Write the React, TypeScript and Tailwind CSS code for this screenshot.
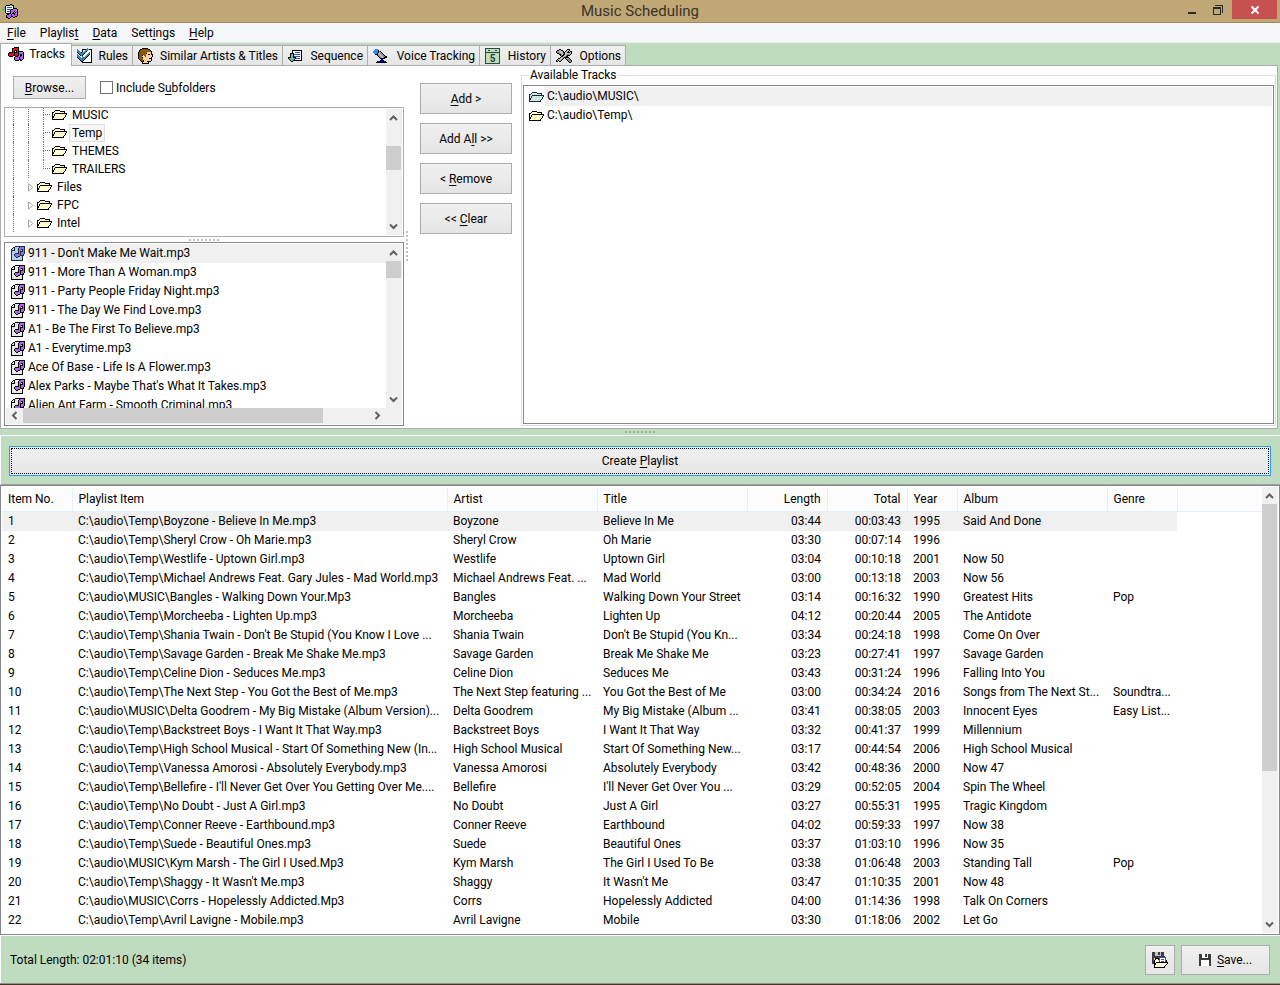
import React, { useState } from 'react';

const palette: Record<string, string> = {
  k: '#000000',
  n: '#1b2a3c',
  p: '#b660f2',
  v: '#8f74e6',
  r: '#d8141c',
  y: '#ffffcc',
  c: '#cfe8e0',
  w: '#e8e8e8',
  W: '#ffffff',
  l: '#b4d2ee',
  b: '#2f4fd0',
  g: '#5fc46a',
  G: '#62c48c',
  d: '#3c3c3c',
  h: '#8a5a00',
  s: '#ffd0a0',
  B: '#2f86b8',
  m: '#1e90ff',
  a: '#8c8c8c',
  x: '#c4c4c4',
  D: '#000080',
};

const icons: Record<string, string[]> = {
  app: [
    '........kk......',
    '....kkkkggkk....',
    '...kWWWWWWWk....',
    '..gkWbbbbbWkg...',
    '.ggkWWWWWWWkkkk.',
    'gggkWbbbbkkppppk',
    '.ggkWWWWkppppppk',
    '..gkWbbbkpppkppk',
    '...kWWWWkppk.kpk',
    '....kkkkkpkkkppk',
    '.....kkppkppkppk',
    '....kppppkpppppk',
    '....kppppkkppkk.',
    '....kkppk..kk...',
    '......kk........',
  ],
  tracks: [
    '......kkkkk.....',
    '....kkrrrrk.....',
    '....krrrrrk.....',
    '....krrkkrk.....',
    '....krk.krkkkkk.',
    '.kkkkrkkkrkppppk',
    'krrrrrkrrrkppppk',
    'krrrrrkrrrkpkkpk',
    'krrrrkkrrkkpkkpk',
    '.kkkk..kkkppkppk',
    '......kppppkpppk',
    '......kppppkpppk',
    '......kppppkkpk.',
    '.......kkkk.kk..',
  ],
  rules: [
    '..........B.....',
    'B....kkkkBBBkkk.',
    'BB...kWWBBBWWWk.',
    'BBB..kWBBkWWWWk.',
    'kBBBkBBBBWWWBWk.',
    '.kBBBBBkWWWBBWk.',
    'B.kBBBkWWWBBkWk.',
    'BB.kBkWWWBBkWWk.',
    'BBB..BWWBBkWWWk.',
    'kBBB.BBBBkWWWWk.',
    '.kBBBBBBkWWWWWk.',
    '..kBBBBkWWWWWWk.',
    '...kBBkWWWWWWWk.',
    '....kkWWWWWWWWk.',
    '.....kkkkkkkkkk.',
  ],
  similar: [
    '....kkkkkk......',
    '..kkhhhhhhkk....',
    '.khhhhhhhhhhk...',
    '.khhhhhhhhhhhk..',
    'khhhhhhhhssssk..',
    'khhhhhhhkssssk..',
    'khhhhhhhsskkskk.',
    'khhhkshhssssssk.',
    'khhhssshssssssk.',
    'khhhkssssssssk..',
    'khhhhsssssskkk..',
    '.khhhssssssssk..',
    '..khhksssssssk..',
    '...kkkssskkkk...',
    '....ksssssk.....',
    '....kkkkkkk.....',
  ],
  sequence: [
    '....kkkkkkkkkk..',
    '....kWWWWWWWWk..',
    '....kWWbbbbbWk..',
    '..kkkkWWWWWWWk..',
    '..kGGkbbbbbbWk..',
    '..kGGkWWWWWWWk..',
    '..kGGkbbbbbbWk..',
    'kkkGGkkkWWWWWk..',
    'kGGGGGGkbbbbWk..',
    '.kGGGGkWWWWWWk..',
    '..kGGkkkkkkkkk..',
    '...kk...........',
  ],
  voice: [
    '..mmm...........',
    '.mmmmk..........',
    'mmmmmkak........',
    'mmmmmkxak.......',
    '.mmmkxxaak......',
    '..kkkaxxaak.....',
    '....kaaxxaak....',
    '.....kaaxxaakk..',
    '......kaaxakkk..',
    '.......kkDkk....',
    '........DD......',
    '.......DDDD.....',
    '....kDDDDDDDk...',
    '...kkkkkkkkkkk..',
  ],
  options: [
    '...kk......kkk..',
    '.kkxxkk...kxxk..',
    'kaaxxxak.kxxk.kk',
    'kaaaxxxkkxxkkkxk',
    '.kkaaxxakxxxxxxk',
    '...kkaxkkxxaaak.',
    '....kakkxxakkk..',
    '.....kkxxakk....',
    '....kxxakkkkk...',
    '..kkxxak.kaaak..',
    '.kxxxak...kaaak.',
    'kxkxak.....kaaak',
    'kk.kk.......kaak',
    '.............kk.',
  ],
  folder: [
    '...kkkkk.......',
    '..kyyyyykkkkk..',
    'kkyyyyyyyyyyk..',
    'kyykkkkkkkkkkkk',
    'kykyyyyyyyyyyyk',
    'kykyyyyyyyyyyk.',
    'kkyyyyyyyyyyyk.',
    'kkyyyyyyyyyyk..',
    'kyyyyyyyyyyk...',
    'kkkkkkkkkkkk...',
  ],
  folderSelected: [
    '...nnnnn.......',
    '..ncccccnnnnn..',
    'nnccccccccccn..',
    'nccnnnnnnnnnnnn',
    'ncncccccccccccn',
    'ncnccccccccccn.',
    'nncccccccccccn.',
    'nnccccccccccn..',
    'nccccccccccn...',
    'nnnnnnnnnnnn...',
  ],
  file: [
    '....kkkkkkkkkk',
    '..kkwwwwkppppk',
    '.kwkwwwkpppppk',
    'kwwkwwwkppkkpk',
    'kkkkwwwkppwkpk',
    'kwwwwwwkpkkkpk',
    'kwwwwwwkpkpppk',
    'kwwwkkkkpkpppk',
    'kwwkpppppkppk.',
    'kwwkpppppkkkk.',
    'kwwwkppkkwwk..',
    'kwwwwkkwwwwk..',
    'kwwwwwwwwwwk..',
    'kwwwwwwwwwwk..',
    'kkkkkkkkkkkk..',
  ],
  fileSelected: [
    '....nnnnnnnnnn',
    '..nnllllnvvvvn',
    '.nlnlllnvvvvvn',
    'nllnlllnvvnnvn',
    'nnnnlllnvvlnvn',
    'nllllllnvnnnvn',
    'nllllllnvnvvvn',
    'nlllnnnnvnvvvn',
    'nllnvvvvvnvvn.',
    'nllnvvvvvnnnn.',
    'nlllnvvnnlln..',
    'nllllnnlllln..',
    'nlllllllllln..',
    'nlllllllllln..',
    'nnnnnnnnnnnn..',
  ],
  save: [
    'dddWWWddWddd',
    'dddWWWddWddd',
    'dddWWWddWddd',
    'dddWWWWWWddd',
    'dddddddddddd',
    'dddddddddddd',
    'ddWWWWWWWWdd',
    'ddWWWWWWWWdd',
    'ddWWWWWWWWdd',
    'ddWWWWWWWWdd',
    'ddWWWWWWWWdd',
    'ddWWWWWWWWdd',
  ],
  saveFolder: [
    'dddxxxddxddd....',
    'dddxxxddxddd....',
    'dddxxxddxddd....',
    'dddxxxxxxddd....',
    'ddddddddddddd...',
    'dddddddbbbbbbb..',
    'dd.kkkkbWWWWWb..',
    'dd.kyykbWbbbWb..',
    'ddkyyyybWWWWWbk.',
    'ddkyyyybWbbbWbk.',
    'ddkykkkkkkkkkkkk',
    'ddkkyyyyyyyyyyyk',
    '..kkyyyyyyyyyyk.',
    '..kyyyyyyyyyyk..',
    '..kyyyyyyyyyk...',
    '..kkkkkkkkkkk...',
  ],
};

const PixelIcon: React.FC<{ name: string }> = ({ name }) => {
  const rows = icons[name];
  const width = rows[0].length;
  return (
    <svg
      width={width}
      height={rows.length}
      viewBox={`0 0 ${width} ${rows.length}`}
      shapeRendering="crispEdges"
      className="shrink-0"
      aria-hidden="true"
    >
      {rows.map((row, y) =>
        row.split('').map((ch, x) =>
          ch === '.' ? null : <rect key={`${x}-${y}`} x={x} y={y} width={1} height={1} fill={palette[ch]} />
        )
      )}
    </svg>
  );
};

const HistoryIcon = () => (
  <svg width={16} height={16} viewBox="0 0 16 16" className="shrink-0" aria-hidden="true">
    <rect x={0.5} y={0.5} width={14} height={15} fill="#c0dcc0" stroke="#2b4a3a" />
    <path d="M3 2.5h2M10 2.5h2M1 4.5h13" stroke="#2b4a3a" />
    <text x={7.5} y={13.5} textAnchor="middle" fontSize={10} fontWeight={600} fill="#1d3a2a">5</text>
  </svg>
);

// "&" marks the letter that gets underlined
const Accel: React.FC<{ text: string }> = ({ text }) => {
  const i = text.indexOf('&');
  if (i < 0) return <span>{text}</span>;
  return (
    <span>
      {text.slice(0, i)}
      <span className="underline underline-offset-2">{text[i + 1]}</span>
      {text.slice(i + 2)}
    </span>
  );
};

const Chevron: React.FC<{ dir: 'up' | 'down' | 'left' | 'right' }> = ({ dir }) => {
  const paths = {
    up: 'M1 7l3.5-3.5L8 7',
    down: 'M1 2.5L4.5 6 8 2.5',
    left: 'M6.5 1L3 4.5 6.5 8',
    right: 'M2.5 1L6 4.5 2.5 8',
  };
  return (
    <svg width={9} height={9} viewBox="0 0 9 9" fill="none" stroke="#606060" strokeWidth={2} aria-hidden="true">
      <path d={paths[dir]} />
    </svg>
  );
};

const VScroll: React.FC<{ before: string; thumb: string }> = ({ before, thumb }) => (
  <div className="w-4 shrink-0 bg-[#f0f0f0] flex flex-col pr-px">
    <div className="h-[17px] flex items-center justify-center shrink-0"><Chevron dir="up" /></div>
    <div className="flex-1 min-h-0">
      <div className={before}></div>
      <div className={`bg-[#cdcdcd] ${thumb}`}></div>
    </div>
    <div className="h-[17px] flex items-center justify-center shrink-0"><Chevron dir="down" /></div>
  </div>
);

const menus = ['&File', 'Playlis&t', '&Data', 'Sett&ings', '&Help'];

const tabs = [
  { name: 'Tracks', icon: 'tracks', width: 'w-[72px]' },
  { name: 'Rules', icon: 'rules', width: 'w-[61px]' },
  { name: 'Similar Artists & Titles', icon: 'similar', width: 'w-[150px]' },
  { name: 'Sequence', icon: 'sequence', width: 'w-[85px]' },
  { name: 'Voice Tracking', icon: 'voice', width: 'w-[112px]' },
  { name: 'History', icon: 'history', width: 'w-[71px]' },
  { name: 'Options', icon: 'options', width: 'w-[75px]' },
];

const subfolders = ['MUSIC', 'Temp', 'THEMES', 'TRAILERS'];
const folders = ['Files', 'FPC', 'Intel'];

const files = [
  "911 - Don't Make Me Wait.mp3",
  '911 - More Than A Woman.mp3',
  '911 - Party People Friday Night.mp3',
  '911 - The Day We Find Love.mp3',
  'A1 - Be The First To Believe.mp3',
  'A1 - Everytime.mp3',
  'Ace Of Base - Life Is A Flower.mp3',
  "Alex Parks - Maybe That's What It Takes.mp3",
  'Alien Ant Farm - Smooth Criminal.mp3',
];

const columns = [
  { name: 'Item No.', width: 'w-[70px]' },
  { name: 'Playlist Item', width: 'w-[375px]' },
  { name: 'Artist', width: 'w-[150px]' },
  { name: 'Title', width: 'w-[150px]' },
  { name: 'Length', width: 'w-[80px]', right: true },
  { name: 'Total', width: 'w-[80px]', right: true },
  { name: 'Year', width: 'w-[50px]' },
  { name: 'Album', width: 'w-[150px]' },
  { name: 'Genre', width: 'w-[70px]' },
];

const playlist = [
  ['C:\\audio\\Temp\\Boyzone - Believe In Me.mp3', 'Boyzone', 'Believe In Me', '03:44', '00:03:43', '1995', 'Said And Done', ''],
  ['C:\\audio\\Temp\\Sheryl Crow - Oh Marie.mp3', 'Sheryl Crow', 'Oh Marie', '03:30', '00:07:14', '1996', '', ''],
  ['C:\\audio\\Temp\\Westlife - Uptown Girl.mp3', 'Westlife', 'Uptown Girl', '03:04', '00:10:18', '2001', 'Now 50', ''],
  ['C:\\audio\\Temp\\Michael Andrews Feat. Gary Jules - Mad World.mp3', 'Michael Andrews Feat. ...', 'Mad World', '03:00', '00:13:18', '2003', 'Now 56', ''],
  ['C:\\audio\\MUSIC\\Bangles - Walking Down Your.Mp3', 'Bangles', 'Walking Down Your Street', '03:14', '00:16:32', '1990', 'Greatest Hits', 'Pop'],
  ['C:\\audio\\Temp\\Morcheeba - Lighten Up.mp3', 'Morcheeba', 'Lighten Up', '04:12', '00:20:44', '2005', 'The Antidote', ''],
  ["C:\\audio\\Temp\\Shania Twain - Don't Be Stupid (You Know I Love ...", 'Shania Twain', "Don't Be Stupid (You Kn...", '03:34', '00:24:18', '1998', 'Come On Over', ''],
  ['C:\\audio\\Temp\\Savage Garden - Break Me Shake Me.mp3', 'Savage Garden', 'Break Me Shake Me', '03:23', '00:27:41', '1997', 'Savage Garden', ''],
  ['C:\\audio\\Temp\\Celine Dion - Seduces Me.mp3', 'Celine Dion', 'Seduces Me', '03:43', '00:31:24', '1996', 'Falling Into You', ''],
  ['C:\\audio\\Temp\\The Next Step - You Got the Best of Me.mp3', 'The Next Step featuring ...', 'You Got the Best of Me', '03:00', '00:34:24', '2016', 'Songs from The Next St...', 'Soundtra...'],
  ['C:\\audio\\MUSIC\\Delta Goodrem - My Big Mistake (Album Version)...', 'Delta Goodrem', 'My Big Mistake (Album ...', '03:41', '00:38:05', '2003', 'Innocent Eyes', 'Easy List...'],
  ['C:\\audio\\Temp\\Backstreet Boys - I Want It That Way.mp3', 'Backstreet Boys', 'I Want It That Way', '03:32', '00:41:37', '1999', 'Millennium', ''],
  ['C:\\audio\\Temp\\High School Musical - Start Of Something New (In...', 'High School Musical', 'Start Of Something New...', '03:17', '00:44:54', '2006', 'High School Musical', ''],
  ['C:\\audio\\Temp\\Vanessa Amorosi - Absolutely Everybody.mp3', 'Vanessa Amorosi', 'Absolutely Everybody', '03:42', '00:48:36', '2000', 'Now 47', ''],
  ["C:\\audio\\Temp\\Bellefire - I'll Never Get Over You Getting Over Me....", 'Bellefire', "I'll Never Get Over You ...", '03:29', '00:52:05', '2004', 'Spin The Wheel', ''],
  ['C:\\audio\\Temp\\No Doubt - Just A Girl.mp3', 'No Doubt', 'Just A Girl', '03:27', '00:55:31', '1995', 'Tragic Kingdom', ''],
  ['C:\\audio\\Temp\\Conner Reeve - Earthbound.mp3', 'Conner Reeve', 'Earthbound', '04:02', '00:59:33', '1997', 'Now 38', ''],
  ['C:\\audio\\Temp\\Suede - Beautiful Ones.mp3', 'Suede', 'Beautiful Ones', '03:37', '01:03:10', '1996', 'Now 35', ''],
  ['C:\\audio\\MUSIC\\Kym Marsh - The Girl I Used.Mp3', 'Kym Marsh', 'The Girl I Used To Be', '03:38', '01:06:48', '2003', 'Standing Tall', 'Pop'],
  ["C:\\audio\\Temp\\Shaggy - It Wasn't Me.mp3", 'Shaggy', "It Wasn't Me", '03:47', '01:10:35', '2001', 'Now 48', ''],
  ['C:\\audio\\MUSIC\\Corrs - Hopelessly Addicted.Mp3', 'Corrs', 'Hopelessly Addicted', '04:00', '01:14:36', '1998', 'Talk On Corners', ''],
  ['C:\\audio\\Temp\\Avril Lavigne - Mobile.mp3', 'Avril Lavigne', 'Mobile', '03:30', '01:18:06', '2002', 'Let Go', ''],
];

const buttonClass = 'border border-[#acacac] bg-linear-to-b from-[#f0f0f0] to-[#e5e5e5] flex items-center justify-center';

const TitleBar = () => (
  <header className="h-[23px] shrink-0 bg-[#c0a876] border-b border-[#a08a5c] grid grid-cols-[1fr_auto_1fr]">
    <div className="pl-0.5 flex items-center"><PixelIcon name="app" /></div>
    <h1 className="text-[15px] leading-[23px] text-[#3a3226]">Music Scheduling</h1>
    <div className="flex justify-end pr-[3px]">
      <button aria-label="Minimize" className="w-[26px] h-[19px] flex items-center justify-center">
        <svg width={10} height={10} viewBox="0 0 10 10"><path d="M1 7h8v2H1z" fill="#2a2a2a" /></svg>
      </button>
      <button aria-label="Restore" className="w-[26px] h-[19px] flex items-center justify-center">
        <svg width={10} height={10} viewBox="0 0 10 10" fill="none" stroke="#2a2a2a" shapeRendering="crispEdges">
          <path d="M.5 3v6.5h7V3M2 .5h7.5V8" />
          <path d="M0 3h8" strokeWidth={2} />
        </svg>
      </button>
      <button aria-label="Close" className="w-[45px] h-[19px] ml-px bg-[#c75050] flex items-center justify-center">
        <svg width={8} height={8} viewBox="0 0 8 8"><path d="M.5.5l7 7M7.5.5l-7 7" stroke="#fff" strokeWidth={2} /></svg>
      </button>
    </div>
  </header>
);

const FolderTree = () => (
  <div className="h-[130px] border border-[#acacac] flex p-px pl-0 overflow-hidden">
    <div className="flex-1 -mt-[3px] pl-2">
      {subfolders.map((name, i) => (
        <div key={name} className="h-[18px] flex items-center">
          <span className="w-[15px] h-full border-l border-dotted border-[#707070]"></span>
          <span className="w-[15px] h-full border-l border-dotted border-[#707070]"></span>
          <span className="w-[9px] h-full">
            <span className="block w-[7px] h-1/2 border-l border-b border-dotted border-[#707070]"></span>
            {i < subfolders.length - 1 && <span className="block h-1/2 border-l border-dotted border-[#707070]"></span>}
          </span>
          <PixelIcon name="folder" />
          <span className={`ml-0.5 px-0.5 border leading-4 ${name === 'Temp' ? 'border-[#dedede] bg-[#f7f7f7]' : 'border-transparent'}`}>{name}</span>
        </div>
      ))}
      {folders.map((name) => (
        <div key={name} className="h-[18px] flex items-center">
          <span className="w-[15px] h-full border-l border-dotted border-[#707070]"></span>
          <span className="w-[9px]">
            <svg width={6} height={9} viewBox="0 0 6 9"><path d="M.5.8v7.4L4.8 4.5z" fill="#fff" stroke="#a6a6a6" /></svg>
          </span>
          <PixelIcon name="folder" />
          <span className="ml-0.5 px-0.5 border border-transparent leading-4">{name}</span>
        </div>
      ))}
    </div>
    <VScroll before="h-5" thumb="h-6" />
  </div>
);

const FileList = () => (
  <div className="h-[184px] border border-[#828790] p-px flex flex-col">
    <div className="flex-1 min-h-0 flex">
      <ul className="flex-1 overflow-hidden">
        {files.map((file, i) => (
          <li key={file} className="h-[19px] flex items-center pl-[5px]">
            <PixelIcon name={i === 0 ? 'fileSelected' : 'file'} />
            <span className={`flex-1 ml-px pl-0.5 leading-[19px] whitespace-nowrap ${i === 0 ? 'bg-[#f0f0f0]' : ''}`}>{file}</span>
          </li>
        ))}
      </ul>
      <VScroll before="h-0" thumb="h-[17px]" />
    </div>
    <div className="h-4 shrink-0 bg-[#f0f0f0] flex items-center pr-4 pb-px">
      <div className="w-[17px] flex justify-center"><Chevron dir="left" /></div>
      <div className="w-[300px] h-[15px] bg-[#cdcdcd]"></div>
      <div className="flex-1"></div>
      <div className="w-[17px] flex justify-center"><Chevron dir="right" /></div>
    </div>
  </div>
);

const TracksPanel = () => {
  const [recursive, setRecursive] = useState(false);
  return (
    <main className="mr-0.5 border border-[#acacac] bg-white flex pl-[3px] pb-0.5">
      <section className="w-[400px] shrink-0">
        <div className="h-[41px] flex items-center pt-0.5 pl-[9px] gap-3.5">
          <button className={`w-[73px] h-[23px] ${buttonClass}`}><Accel text="&Browse..." /></button>
          <label className="flex items-center gap-[3px]">
            <input
              type="checkbox"
              checked={recursive}
              onChange={(e) => setRecursive(e.target.checked)}
              className="appearance-none w-[13px] h-[13px] border border-[#707070] bg-white checked:bg-[#707070]"
            />
            <Accel text="Include S&ubfolders" />
          </label>
        </div>
        <FolderTree />
        <div className="h-[5px] flex items-center justify-center">
          <div className="w-[30px] border-t-2 border-dotted border-[#c0c0c0]"></div>
        </div>
        <FileList />
      </section>
      <div className="w-4 shrink-0 flex items-center pl-0.5">
        <div className="h-[30px] border-l-2 border-dotted border-[#c0c0c0]"></div>
      </div>
      <div className="w-[92px] shrink-0 flex flex-col gap-[9px] pt-[17px]">
        {['&Add >', 'Add A&ll >>', '< &Remove', '<< &Clear'].map((label) => (
          <button key={label} className={`h-[31px] ${buttonClass}`}><Accel text={label} /></button>
        ))}
      </div>
      <fieldset className="flex-1 min-w-0 ml-[9px] mr-px flex flex-col border border-[#dcdcdc] p-px pt-0">
        <legend className="ml-1.5 px-px leading-[19px]">Available Tracks</legend>
        <ul className="flex-1 border border-[#828790] p-px">
          <li className="h-[19px] flex items-center pl-1">
            <PixelIcon name="folderSelected" />
            <span className="flex-1 ml-px pl-0.5 leading-[19px] bg-[#f0f0f0]">C:\audio\MUSIC\</span>
          </li>
          <li className="h-[19px] flex items-center pl-1">
            <PixelIcon name="folder" />
            <span className="flex-1 ml-px pl-0.5 leading-[19px]">C:\audio\Temp\</span>
          </li>
        </ul>
      </fieldset>
    </main>
  );
};

const PlaylistTable = () => (
  <div className="flex-1 min-h-0 border border-[#828790] bg-white p-px flex">
    <div className="flex-1 min-w-0 overflow-hidden">
      <table className="w-full table-fixed border-collapse">
        <thead>
          <tr className="h-6 bg-[#fcfcfc] border-b border-[#e5f0fb]">
            {columns.map((col) => (
              <th
                key={col.name}
                className={`${col.width} px-1.5 font-normal whitespace-nowrap border-r border-[#e5f0fb] ${col.right ? 'text-right' : 'text-left'}`}
              >
                {col.name}
              </th>
            ))}
            <th></th>
          </tr>
        </thead>
        <tbody>
          {playlist.map((track, i) => (
            <tr key={track[0]} className="h-[19px]">
              {[String(i + 1), ...track].map((value, c) => (
                <td
                  key={c}
                  className={`px-1.5 leading-[19px] whitespace-nowrap ${columns[c].right ? 'text-right' : ''} ${i === 0 ? 'bg-[#f0f0f0]' : ''}`}
                >
                  {value}
                </td>
              ))}
              <td></td>
            </tr>
          ))}
        </tbody>
      </table>
    </div>
    <VScroll before="h-0" thumb="h-[267px]" />
  </div>
);

export default function App() {
  const [activeTab, setActiveTab] = useState('Tracks');

  return (
    <div className="h-screen flex flex-col bg-[#c0dcc0] text-black text-[12px] leading-4 font-['Roboto',sans-serif]">
      <TitleBar />

      <nav className="h-5 shrink-0 bg-[#f5f6f7] border-b border-[#e8e8e8] flex items-center">
        {menus.map((menu) => (
          <button key={menu} className="px-[7px]"><Accel text={menu} /></button>
        ))}
      </nav>

      <div className="h-[22px] shrink-0 flex items-end" role="tablist">
        {tabs.map((tab) => (
          <button
            key={tab.name}
            role="tab"
            aria-selected={activeTab === tab.name}
            onClick={() => setActiveTab(tab.name)}
            className={`${tab.width} flex items-center justify-between border-[#acacac] whitespace-nowrap ${
              activeTab === tab.name
                ? 'h-[23px] -mb-px border-x border-t bg-white pl-[7px] pr-1.5 pb-0.5 relative'
                : 'h-5 border-r border-t bg-linear-to-b from-[#f0f0f0] to-[#e5e5e5] pl-[5px] pr-1'
            }`}
          >
            {tab.icon === 'history' ? <HistoryIcon /> : <PixelIcon name={tab.icon} />}
            <span>{tab.name}</span>
          </button>
        ))}
      </div>

      <TracksPanel />

      <div className="h-[7px] shrink-0 flex items-center justify-center border-b border-white">
        <div className="w-[30px] border-t-2 border-dotted border-[#9ab09a]"></div>
      </div>

      <div className="shrink-0 pl-2 pr-[9px] pt-2.5 pb-2 border-l border-white border-b border-b-[#a0a0a0]">
        <button className="w-full h-[30px] border border-[#3399ff] p-px bg-linear-to-b from-[#f0f0f0] to-[#e5e5e5] flex">
          <span className="flex-1 self-stretch border border-dotted border-black flex items-center justify-center">
            <Accel text="Create &Playlist" />
          </span>
        </button>
      </div>

      <PlaylistTable />

      <footer className="h-12 shrink-0 border-t border-l border-white flex items-center pl-[9px] pr-2.5 gap-1.5">
        <span className="flex-1">Total Length: 02:01:10 (34 items)</span>
        <button aria-label="Save and open" className={`w-[30px] h-[30px] ${buttonClass}`}><PixelIcon name="saveFolder" /></button>
        <button className={`w-[89px] h-[30px] gap-1.5 ${buttonClass}`}>
          <PixelIcon name="save" />
          <Accel text="&Save..." />
        </button>
      </footer>
      <div className="h-0.5 shrink-0 bg-[#4a3320] border-t border-[#909090]"></div>
    </div>
  );
}
